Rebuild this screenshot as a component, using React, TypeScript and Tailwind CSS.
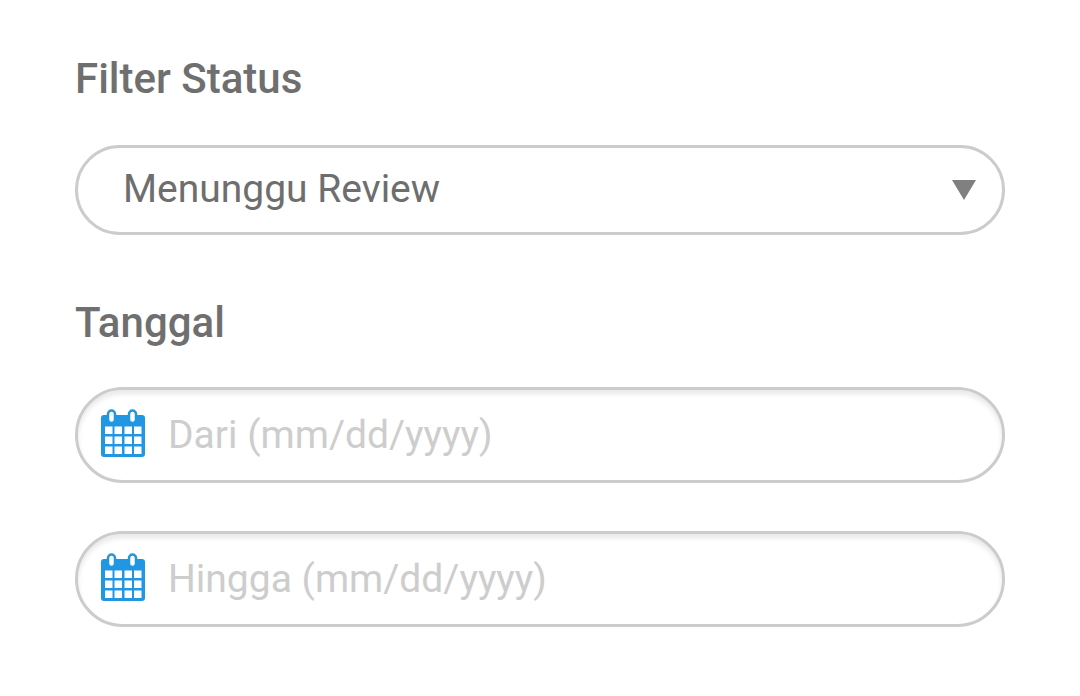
function CalendarIcon() {
  const xs = [5, 14.5, 24.5, 34];
  return (
    <svg width="46" height="50" viewBox="0 0 46 50" className="shrink-0 -translate-y-px">
      <rect x="1" y="6" width="44" height="42" rx="3" fill="#2196e3" />
      <rect x="8" y="1.5" width="7" height="12.5" rx="3.5" fill="#fff" stroke="#2196e3" strokeWidth="2.5" />
      <rect x="29" y="1.5" width="7" height="12.5" rx="3.5" fill="#fff" stroke="#2196e3" strokeWidth="2.5" />
      {[17.5, 27.5, 37.5].map((y) =>
        xs.map((x) => <rect key={`${x}-${y}`} x={x} y={y} width="7.5" height="7.5" fill="#fff" />)
      )}
    </svg>
  );
}

function DateField({ label }: { label: string }) {
  return (
    <div className="flex h-[96px] w-[930px] items-center rounded-[48px] border-[3px] border-[#cccccc] bg-white pl-[22px] shadow-[inset_0_4px_5px_rgba(0,0,0,0.09)]">
      <CalendarIcon />
      <span className="ml-[22px] text-[39px] leading-none text-[#cdcdcd]">{label}</span>
    </div>
  );
}

export default function App() {
  return (
    <div className="h-[696px] w-[1080px] overflow-hidden bg-white pl-[75px] pt-[56px] font-['Roboto',sans-serif]">
      <div className="text-[42px] font-medium leading-[46px] text-[#6f6f6f]">Filter Status</div>
      <div className="mt-[43px] flex h-[90px] w-[930px] items-center justify-between rounded-[45px] border-[3px] border-[#cccccc] bg-white pl-[45px] pr-[26px]">
        <span className="-translate-y-px text-[39px] leading-none text-[#6e6e6e]">Menunggu Review</span>
        <svg width="24" height="20" viewBox="0 0 24 20"><path d="M0 0H24L12 20Z" fill="#808080" /></svg>
      </div>
      <div className="mt-[65px] text-[42px] font-medium leading-[46px] text-[#6f6f6f]">Tanggal</div>
      <div className="mt-[41px] flex flex-col gap-[48px]">
        <DateField label="Dari (mm/dd/yyyy)" />
        <DateField label="Hingga (mm/dd/yyyy)" />
      </div>
    </div>
  );
}
